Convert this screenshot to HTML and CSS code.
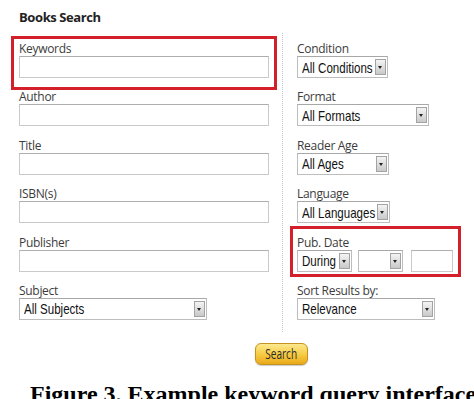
FILE: index.html
```html
<!DOCTYPE html>
<html lang="en">
<head>
  <meta charset="UTF-8" />
  <meta name="viewport" content="width=device-width, initial-scale=1.0"/>
  <title>Books Search</title>
  <link rel="stylesheet" href="styles.css">
</head>
<body>
  <div class="page">
    <h1 class="title">Books Search</h1>

    <div class="form">
      <div class="col col-left">
        <div class="field mark mark-keywords">
          <label>Keywords</label>
          <input type="text" class="text" />
        </div>
        <div class="field">
          <label>Author</label>
          <input type="text" class="text" />
        </div>
        <div class="field">
          <label>Title</label>
          <input type="text" class="text" />
        </div>
        <div class="field">
          <label>ISBN(s)</label>
          <input type="text" class="text" />
        </div>
        <div class="field">
          <label>Publisher</label>
          <input type="text" class="text" />
        </div>
        <div class="field">
          <label>Subject</label>
          <div class="select w-subject"><span class="val">All Subjects</span><span class="arrow"></span></div>
        </div>
      </div>

      <div class="col col-right">
        <div class="field">
          <label>Condition</label>
          <div class="select w-cond"><span class="val">All Conditions</span><span class="arrow"></span></div>
        </div>
        <div class="field">
          <label>Format</label>
          <div class="select w-format"><span class="val">All Formats</span><span class="arrow"></span></div>
        </div>
        <div class="field">
          <label>Reader Age</label>
          <div class="select w-age"><span class="val">All Ages</span><span class="arrow"></span></div>
        </div>
        <div class="field">
          <label>Language</label>
          <div class="select w-lang"><span class="val">All Languages</span><span class="arrow"></span></div>
        </div>
        <div class="field mark mark-date">
          <label>Pub. Date</label>
          <div class="date-row">
            <div class="select w-during"><span class="val">During</span><span class="arrow"></span></div>
            <div class="select w-blank"><span class="val"></span><span class="arrow"></span></div>
            <input type="text" class="text date-input" />
          </div>
        </div>
        <div class="field">
          <label>Sort Results by:</label>
          <div class="select w-sort"><span class="val">Relevance</span><span class="arrow"></span></div>
        </div>
      </div>
    </div>

    <div class="actions">
      <button class="search" type="button"><span>Search</span></button>
    </div>

    <p class="caption">Figure 3. Example keyword query interface</p>
  </div>
</body>
</html>
```

FILE: styles.css
```css
html, body {
  overflow: hidden;
}

body {
  margin: 0;
  background: #fff;
  font-family: "Open Sans", sans-serif;
}

.page {
  padding: 9px 0 0 19px;
}

.title {
  margin: 0;
  font-size: 13px;
  line-height: 16px;
  font-weight: 700;
  letter-spacing: -0.4px;
  color: #222;
}

.form {
  display: flex;
  margin-top: 8px;
}

.col {
  display: flex;
  flex-direction: column;
  padding-top: 9px;
}

.col-left {
  width: 250px;
}

.col-right {
  width: 160px;
  margin-left: 13px;
  padding-left: 14px;
  border-left: 1px dotted #c4c4c4;
}

.field {
  position: relative;
  margin-bottom: 12.4px;
}

.field label {
  display: block;
  font-size: 12px;
  line-height: 14px;
  letter-spacing: -0.3px;
  color: #3c3c3c;
}

.text {
  display: block;
  box-sizing: border-box;
  width: 250px;
  height: 22px;
  margin: 0;
  padding: 0;
  border: 1px solid #cacaca;
  border-top-color: #aeaeae;
  background: #fff;
}

/* fake dropdowns */
.select {
  display: flex;
  align-items: center;
  box-sizing: border-box;
  height: 22px;
  padding: 0 1px 0 4px;
  border: 1px solid #bdbdbd;
  border-top-color: #a8a8a8;
  background: #fff;
}

.val {
  flex: 1;
  min-width: 0;
  font-family: "Liberation Sans", Arial, sans-serif;
  font-size: 15px;
  color: #111;
  white-space: nowrap;
  transform: scaleX(0.77);
  transform-origin: left center;
}

.arrow {
  position: relative;
  flex: none;
  box-sizing: border-box;
  width: 11px;
  height: 16px;
  border: 1px solid #a3a3a3;
  background: linear-gradient(#f4f4f4, #c9c9c9);
}

.arrow::after {
  content: "";
  position: absolute;
  left: 2px;
  top: 6px;
  border-left: 2.5px solid transparent;
  border-right: 2.5px solid transparent;
  border-top: 3px solid #222;
}

.w-subject { width: 188px; }
.w-cond { width: 91px; }
.w-format { width: 132px; }
.w-age { width: 92px; }
.w-lang { width: 93px; }
.w-sort { width: 138px; }
.w-during { width: 55px; margin-right: 6px; }
.w-blank { width: 45px; margin-right: 8px; }

.date-row {
  display: flex;
}

.date-input {
  width: 42px;
}

/* red highlight boxes */
.mark::after {
  content: "";
  position: absolute;
  box-sizing: border-box;
  border: 3px solid #d3202b;
  pointer-events: none;
}

.mark-keywords::after {
  top: -6px;
  bottom: -12px;
  left: -8px;
  right: -8px;
}

.mark-date::after {
  top: -10px;
  bottom: -5px;
  left: -7px;
  width: 171px;
}

.actions {
  margin-top: 10px;
}

.search {
  width: 53px;
  height: 22px;
  margin-left: 236px;
  padding: 0;
  border: 1px solid #c4921f;
  border-radius: 6px;
  background: linear-gradient(#fce98f, #f6c93f 55%, #eaa91c);
  box-shadow: 0 1px 1px rgba(0,0,0,0.2);
  font-family: "Open Sans", sans-serif;
  font-size: 14px;
  color: #2b2b2b;
}

.search span {
  display: inline-block;
  transform: scaleX(0.72);
}

.caption {
  margin: 17px 0 0 11px;
  font-family: "Liberation Serif", "Times New Roman", serif;
  font-size: 24px;
  line-height: 25px;
  font-weight: 700;
  white-space: nowrap;
  color: #000;
}
```
